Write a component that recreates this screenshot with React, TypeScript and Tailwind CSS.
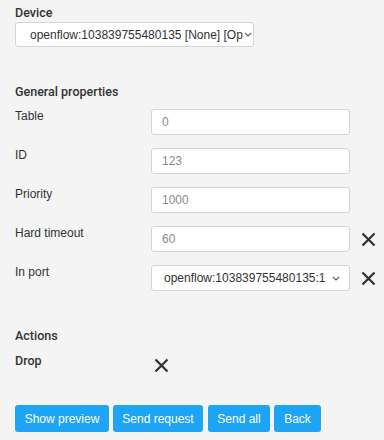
import React from "react";

const XIcon = () => (
  <svg width="15" height="15" viewBox="0 0 15 15" className="block">
    <path d="M1.5 1.5 L13.5 13.5 M13.5 1.5 L1.5 13.5" stroke="#333" strokeWidth="2.3" strokeLinecap="butt" />
  </svg>
);

const Chevron = () => (
  <svg width="8" height="5" viewBox="0 0 8 5" className="block shrink-0">
    <path d="M0.8 0.8 L4 4 L7.2 0.8" stroke="#555" strokeWidth="1.1" fill="none" />
  </svg>
);

const headFont = { fontFamily: 'Roboto, "Liberation Sans", Arial, sans-serif' };

const Row = ({ label, value, select, x }: { label: string; value: string; select?: boolean; x?: boolean }) => (
  <div className="flex items-start h-[26px] w-[380px]">
    <div className="w-[136px] shrink-0 text-[12px] leading-[15px] text-[#333]">{label}</div>
    {select ? (
      <div className="w-[199px] shrink-0 h-[26px] bg-white border border-[#d4d4d4] rounded-[3px] flex items-center justify-between pl-[12px] pr-[9px] text-[12px] text-[#333]">
        <span className="whitespace-nowrap">{value}</span>
        <Chevron />
      </div>
    ) : (
      <div className="w-[199px] shrink-0 h-[26px] bg-white border border-[#d4d4d4] rounded-[3px] flex items-center pl-[10px] text-[12px] text-[#8a8a8a]">
        {value}
      </div>
    )}
    {x && (
      <div className="ml-[11px] shrink-0 self-center">
        <XIcon />
      </div>
    )}
  </div>
);

const Btn = ({ children, w }: { children: React.ReactNode; w: string }) => (
  <button className={`h-[27px] ${w} shrink-0 flex items-center justify-center bg-[#1da4f5] text-white text-[12px] rounded-[3px] leading-none whitespace-nowrap`}>
    {children}
  </button>
);

export default function App() {
  return (
    <div
      className="w-[384px] h-[440px] bg-[#f4f4f4] px-[15px] pt-[5px] overflow-hidden"
      style={{ fontFamily: '"Liberation Sans", Arial, sans-serif' }}
    >
      <div className="text-[12.5px] leading-[15px] font-medium text-[#333]" style={headFont}>Device</div>
      <div className="mt-[2px] w-[239px] h-[25px] bg-white border border-[#d4d4d4] rounded-[3px] flex items-center pl-[14px] pr-[4px] text-[12px] text-[#333]">
        <span className="whitespace-nowrap overflow-hidden w-[213px] shrink-0">openflow:103839755480135 [None] [Op</span>
        <span className="ml-[1px]"><Chevron /></span>
      </div>

      <div className="mt-[37px] text-[12.5px] leading-[15px] font-medium text-[#333]" style={headFont}>General properties</div>
      <div className="mt-[10px] flex flex-col gap-[13px]">
        <Row label="Table" value="0" />
        <Row label="ID" value="123" />
        <Row label="Priority" value="1000" />
        <Row label="Hard timeout" value="60" x />
        <Row label="In port" value="openflow:103839755480135:1" select x />
      </div>

      <div className="mt-[37px] text-[12.5px] leading-[15px] font-medium text-[#333]" style={headFont}>Actions</div>
      <div className="mt-[10px] flex items-start h-[20px]">
        <div className="w-[139px] shrink-0 text-[12.5px] leading-[15px] font-medium text-[#333]" style={headFont}>Drop</div>
        <div className="mt-[5px]">
          <XIcon />
        </div>
      </div>

      <div className="mt-[32px] flex">
        <Btn w="w-[94px]">Show preview</Btn>
        <div className="w-[4px] shrink-0" />
        <Btn w="w-[90px]">Send request</Btn>
        <div className="w-[5px] shrink-0" />
        <Btn w="w-[62px]">Send all</Btn>
        <div className="w-[4px] shrink-0" />
        <Btn w="w-[47px]">Back</Btn>
      </div>
    </div>
  );
}
